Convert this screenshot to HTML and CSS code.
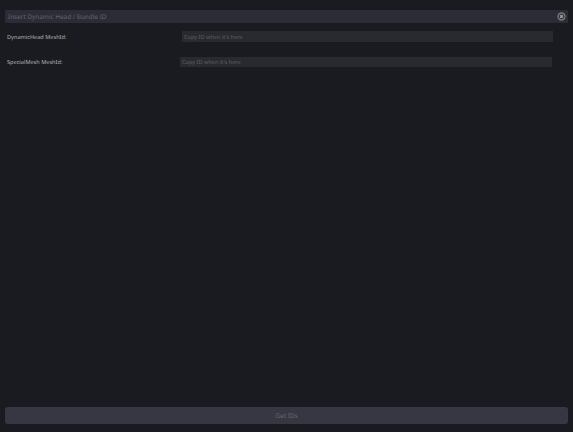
FILE: index.html
```html
<!doctype html>
<html>
    <head>
    <title>Dynamic Head</title>
    <link rel="stylesheet" href="styles.css">
    </head>

    <body>
        <div id="app">
            <div id="searchBar">
                <input class="search-input" type="text" placeholder="Insert Dynamic Head / Bundle ID">
                <svg class="clear-icon" viewBox="0 0 10 10" width="9" height="9">
                    <circle cx="5" cy="5" r="4.6" fill="#77787c"/>
                    <circle cx="5" cy="5" r="3.1" fill="#34353f"/>
                    <path d="M3.6 3.6L6.4 6.4M6.4 3.6L3.6 6.4" stroke="#a5a6aa" stroke-width="1.3"/>
                </svg>
            </div>
            <div class="field-row row-head">
                <label class="field-label">DynamicHead MeshId:</label>
                <input class="field-input" type="text" placeholder="Copy ID when it's here">
            </div>
            <div class="field-row row-mesh">
                <label class="field-label">SpecialMesh MeshId:</label>
                <input class="field-input" type="text" placeholder="Copy ID when it's here">
            </div>
            <button id="getBtn">Get IDs</button>
        </div>
    </body>
</html>
```

FILE: styles.css
```css
html, body {
    margin: 0;
    height: 100%;
    background: #1a1b20;
}
body {
    font-family: "Noto Sans", sans-serif;
    text-rendering: geometricPrecision;
    overflow: hidden;
}
#app {
    box-sizing: border-box;
    height: 432px;
    padding: 10px 5px 8px 5px;
    display: flex;
    flex-direction: column;
}
#searchBar {
    height: 13px;
    display: flex;
    align-items: center;
    background: #2b2c38;
    border-radius: 1px;
    padding: 0 2px 0 3px;
}
.search-input {
    flex: 1;
    min-width: 0;
    background: none;
    border: 0;
    outline: none;
    padding: 0;
    font: 6.4px "Noto Sans", sans-serif;
    text-rendering: geometricPrecision;
}
.search-input::placeholder {
    color: #62636e;
    opacity: 1;
}
.clear-icon {
    flex: none;
}
.field-row {
    display: flex;
    align-items: center;
}
.row-head {
    margin-top: 8px;
    height: 11px;
    padding: 0 15px 0 2px;
}
.row-mesh {
    margin-top: 15px;
    height: 10px;
    padding: 0 16px 0 2px;
}
.field-label {
    color: #b4b5b9;
    font-size: 5.6px;
}
.row-head .field-label {
    width: 175px;
}
.row-mesh .field-label {
    width: 173px;
}
.field-input {
    flex: 1;
    min-width: 0;
    height: 100%;
    box-sizing: border-box;
    background: #292a30;
    border: 0;
    outline: none;
    padding: 0 2px;
    font: 5.6px "Noto Sans", sans-serif;
    text-rendering: geometricPrecision;
}
.field-input::placeholder {
    color: #5d5e66;
    opacity: 1;
}
#getBtn {
    margin-top: auto;
    height: 17px;
    background: #363742;
    border: 0;
    border-radius: 3px;
    color: #666770;
    font: 6.5px "Noto Sans", sans-serif;
    text-rendering: geometricPrecision;
}
```
